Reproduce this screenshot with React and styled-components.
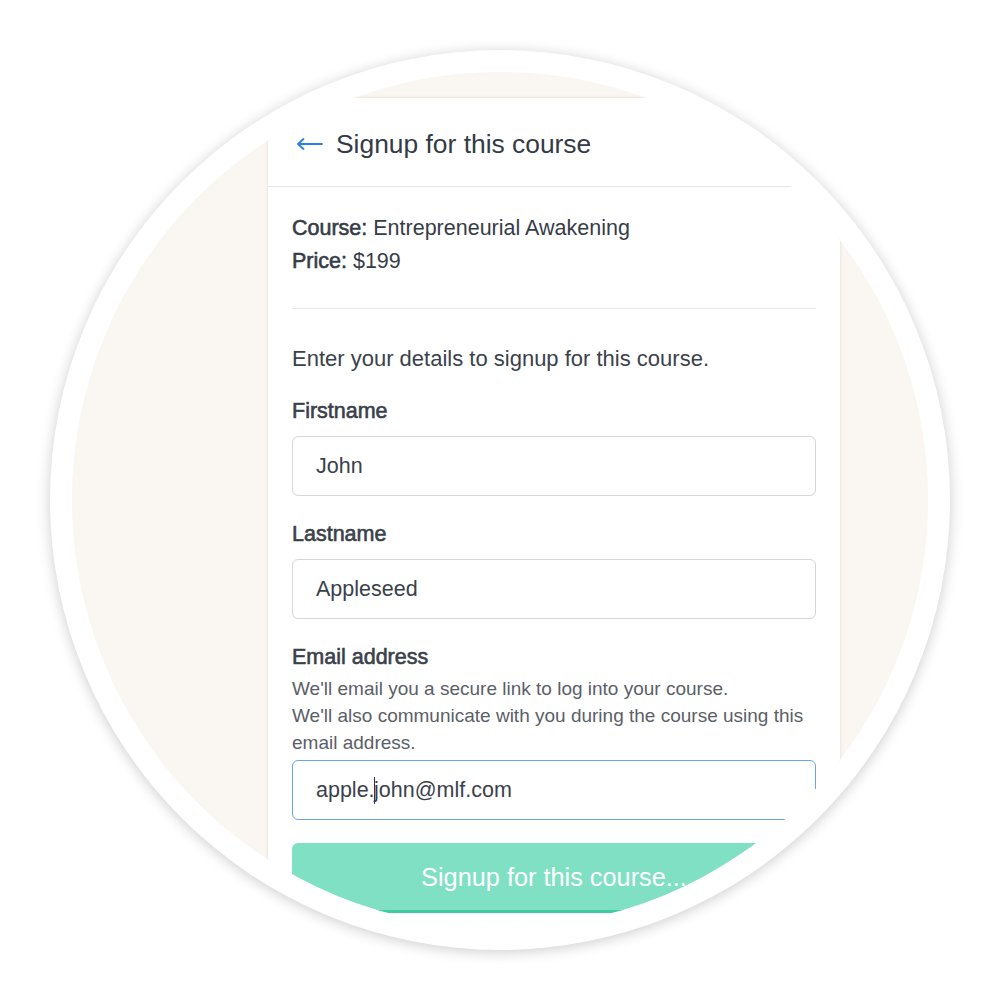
import styled, { createGlobalStyle } from 'styled-components'

const GlobalStyle = createGlobalStyle`
    html, body {
        margin: 0;
        padding: 0;
        background: #ffffff;
    }
    * {
        box-sizing: border-box;
    }
`

const Stage = styled.div`
    width: 1000px;
    height: 1000px;
    display: flex;
    align-items: center;
    justify-content: center;
    background: #ffffff;
    font-family: "Liberation Sans", Arial, sans-serif;
`

const Ring = styled.div`
    width: 900px;
    height: 900px;
    padding: 22px;
    border-radius: 50%;
    background: #ffffff;
    box-shadow: 0 2px 14px rgba(0, 0, 0, 0.2);
`

const Lens = styled.div`
    width: 856px;
    height: 856px;
    border-radius: 50%;
    overflow: hidden;
    background: #faf6f1;
    display: flex;
    align-items: flex-start;
    padding: 26px 0 0 196px;
`

const Card = styled.div`
    width: 572px;
    flex-shrink: 0;
    background: #ffffff;
    box-shadow: 0 0 3px rgba(120, 100, 70, 0.18);
    padding-bottom: 80px;
    color: #363d47;
`

const Header = styled.div`
    height: 89px;
    display: flex;
    align-items: center;
    gap: 13px;
    padding: 4px 28px 0 28px;
    border-bottom: 1px solid #e6e6e6;
`

const BackArrow = styled.svg`
    width: 27px;
    height: 12px;
    flex-shrink: 0;
`

const Title = styled.div`
    font-size: 26.4px;
    color: #343b45;
`

const Body = styled.div`
    padding: 25px 24px 0 24px;
`

const InfoLine = styled.div`
    font-size: 21.5px;
    line-height: 33px;
`

const Strong = styled.span`
    -webkit-text-stroke: 0.6px currentColor;
`

const Divider = styled.div`
    height: 1px;
    background: #e8e8e8;
    margin: 30px 0 33px 0;
`

const Intro = styled.div`
    font-size: 22px;
    line-height: 33px;
    color: #3b424b;
`

const Group = styled.div`
    margin-top: ${props => props.$first ? '20px' : '22px'};
`

const Label = styled.div`
    font-size: 21.5px;
    line-height: 33px;
    -webkit-text-stroke: 0.6px currentColor;
    color: #3a414b;
    margin-bottom: ${props => props.$tight ? '0' : '8px'};
`

const Help = styled.div`
    font-size: 19px;
    line-height: 27px;
    color: #5b6068;
    margin: 1px 0 4px 0;
    white-space: nowrap;
`

const Field = styled.div`
    height: 60px;
    display: flex;
    align-items: center;
    padding: 0 23px;
    border: 1.5px solid ${props => props.$focused ? '#66a6e8' : '#d6d6d6'};
    border-radius: 6px;
    font-size: 21.5px;
    color: #3a414b;
    background: #ffffff;
`

const Caret = styled.span`
    display: inline-block;
    width: 1.5px;
    height: 27px;
    margin: 0 -1px;
    background: #2f3640;
    vertical-align: middle;
`

const Submit = styled.div`
    margin-top: 23px;
    height: 70px;
    display: flex;
    align-items: center;
    justify-content: center;
    padding-top: 1px;
    border-radius: 6px;
    background: #7fe0c4;
    border-bottom: 3px solid #3ecb9f;
    color: #ffffff;
    font-size: 25.3px;
`

const App = () => {
    return (
        <Stage>
            <GlobalStyle />
            <Ring>
                <Lens>
                    <Card>
                        <Header>
                            <BackArrow viewBox="0 0 27 12">
                                <path d="M2 6 H26 M7.5 1 L2 6 L7.5 11" fill="none" stroke="#2f7fe0" strokeWidth="1.8" strokeLinecap="round" strokeLinejoin="round" />
                            </BackArrow>
                            <Title>Signup for this course</Title>
                        </Header>
                        <Body>
                            <InfoLine><Strong>Course:</Strong> Entrepreneurial Awakening</InfoLine>
                            <InfoLine><Strong>Price:</Strong> $199</InfoLine>
                            <Divider />
                            <Intro>Enter your details to signup for this course.</Intro>

                            <Group $first>
                                <Label>Firstname</Label>
                                <Field>John</Field>
                            </Group>

                            <Group>
                                <Label>Lastname</Label>
                                <Field>Appleseed</Field>
                            </Group>

                            <Group>
                                <Label $tight>Email address</Label>
                                <Help>
                                    We'll email you a secure link to log into your course.<br />
                                    We'll also communicate with you during the course using this<br />
                                    email address.
                                </Help>
                                <Field $focused>apple.<Caret />john@mlf.com</Field>
                            </Group>

                            <Submit>Signup for this course...</Submit>
                        </Body>
                    </Card>
                </Lens>
            </Ring>
        </Stage>
    )
}

export default App
